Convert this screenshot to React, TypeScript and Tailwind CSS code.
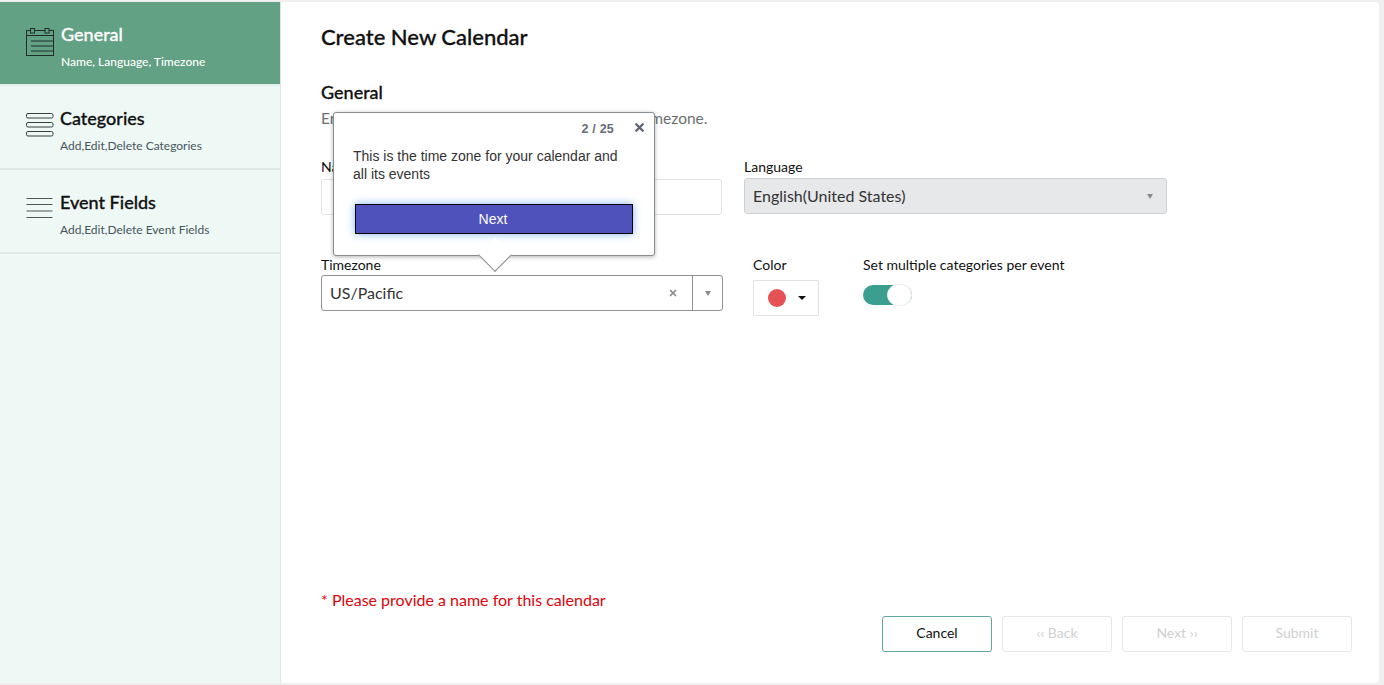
import { ReactNode } from 'react';
import { X } from 'lucide-react';

const CalendarIcon = () => (
  <svg width="30" height="30" viewBox="0 0 30 30" fill="none" stroke="#1f2d2a" strokeWidth="1">
    <rect x="1.5" y="4.5" width="27" height="25" />
    <path d="M1.5 9.5h27M6 15h22M6 20h22M6 25h22" />
    <rect x="5.5" y="2.5" width="4" height="4.5" fill="#62a184" />
    <rect x="20" y="2.5" width="4" height="4.5" fill="#62a184" />
  </svg>
);

const CategoriesIcon = () => (
  <svg width="30" height="30" viewBox="0 0 30 30" fill="none" stroke="#33413e" strokeWidth="1">
    <rect x="1.5" y="3.5" width="26.5" height="4.5" rx="1.5" />
    <rect x="1.5" y="12.5" width="26.5" height="4.5" rx="1.5" />
    <rect x="1.5" y="21.5" width="26.5" height="4.5" rx="1.5" />
  </svg>
);

const FieldsIcon = () => (
  <svg width="30" height="30" viewBox="0 0 30 30" fill="none" stroke="#4a5754" strokeWidth="1">
    <path d="M1.5 4.5h26M1.5 10.5h26M1.5 17h26M1.5 23.5h26" />
  </svg>
);

const Arrow = ({ className }: { className: string }) => (
  <span className={`inline-block h-0 w-0 border-x-[3.5px] border-t-[5px] border-x-transparent ${className}`} />
);

const NavItem = ({
  icon,
  title,
  sub,
  active,
}: {
  icon: ReactNode;
  title: string;
  sub: string;
  active?: boolean;
}) => (
  <div
    className={`flex h-[84px] border-b-2 pl-[25px] pt-[21px] ${
      active ? 'border-[#e3efe9] bg-[#62a184]' : 'border-[#dfe8e3]'
    }`}
  >
    <div className={`w-[30px] pt-[3px] ${active ? 'mr-[6px]' : 'mr-[5px]'}`}>{icon}</div>
    <div>
      <div className={`text-[18px] font-medium leading-[22px] [-webkit-text-stroke:0.3px] ${active ? 'text-white' : 'text-[#111]'}`}>{title}</div>
      <div className={`mt-[9px] text-[12px] leading-[16px] ${active ? 'font-medium text-white' : 'text-[#47555c]'}`}>{sub}</div>
    </div>
  </div>
);

const FooterButton = ({ label, primary }: { label: string; primary?: boolean }) => (
  <button
    className={`h-[36px] w-[110px] rounded-[3px] border pb-[3px] text-[14px] ${
      primary ? 'border-[#62a89c] text-[#111]' : 'border-[#e6e6e6] text-[#cfcfcf]'
    }`}
  >
    {label}
  </button>
);

export default function App() {
  return (
    <div className="h-[685px] w-[1384px] overflow-hidden bg-[#efefef] pb-[2px] pr-[5px] pt-[2px] font-['Lato',sans-serif]">
      <div className="flex h-full rounded-r-[3px] bg-white">
        <aside className="w-[281px] shrink-0 border-r border-[#dfe5e2] bg-[#eef8f5]">
          <NavItem icon={<CalendarIcon />} title="General" sub="Name, Language, Timezone" active />
          <NavItem icon={<CategoriesIcon />} title="Categories" sub="Add,Edit,Delete Categories" />
          <NavItem icon={<FieldsIcon />} title="Event Fields" sub="Add,Edit,Delete Event Fields" />
        </aside>

        <main className="relative flex min-w-0 flex-1 flex-col pl-[40px] pr-[27px] text-[#111]">
          <h1 className="mt-[21px] text-[22px] font-medium leading-[28px] [-webkit-text-stroke:0.3px]">Create New Calendar</h1>
          <h2 className="mt-[29px] text-[18px] font-medium leading-[24px] [-webkit-text-stroke:0.3px]">General</h2>
          <p className="mt-[4px] text-[15.5px] leading-[20px] text-[#6b6f73]">
            Enter a name and select the language and your timezone.
          </p>

          <div className="mt-[30px] flex">
            <div className="w-[401px]">
              <label className="block text-[14px] leading-[18px]">Name</label>
              <div className="mt-[3px] h-[36px] rounded-[3px] border border-[#e2e2e2]" />
            </div>
            <div className="ml-[22px] w-[423px]">
              <label className="block text-[14px] leading-[18px]">Language</label>
              <div className="mt-[2px] flex h-[36px] items-center justify-between rounded-[3px] border border-[#cfd1d3] bg-[#e7e8ea] pl-[8px] pr-[13px] text-[16px] text-[#333]">
                <span>English(United States)</span>
                <Arrow className="border-t-[#8a8a8a]" />
              </div>
            </div>
          </div>

          <div className="mt-[41px] flex">
            <div className="w-[402px]">
              <label className="block text-[14px] leading-[18px]">Timezone</label>
              <div className="mt-[1px] flex h-[36px] items-center rounded-[3px] border border-[#8f9396] pl-[8px] text-[16px] text-[#333]">
                <span className="flex-1">US/Pacific</span>
                <X size={10} strokeWidth={4} className="mr-[14px] text-[#888]" />
                <span className="flex h-full w-[30px] items-center justify-center border-l border-[#8f9396]">
                  <Arrow className="border-t-[#8a8a8a]" />
                </span>
              </div>
            </div>
            <div className="ml-[30px] w-[110px]">
              <label className="block text-[14px] leading-[18px]">Color</label>
              <div className="mt-[6px] flex h-[36px] w-[66px] items-center rounded-[1px] border border-[#e2e2e2] pl-[14px]">
                <span className="h-[18px] w-[18px] rounded-full bg-[#e45253]" />
                <span className="ml-[12px] h-0 w-0 border-x-[4px] border-t-[4px] border-x-transparent border-t-[#111]" />
              </div>
            </div>
            <div>
              <label className="block text-[14px] leading-[18px]">Set multiple categories per event</label>
              <div className="mt-[11px] flex h-[20px] w-[49px] items-center justify-end rounded-full bg-[#3b9f8f]">
                <span className="h-[22px] w-[25px] rounded-full border border-[#eee] bg-white" />
              </div>
            </div>
          </div>

          <div className="mt-auto flex flex-col pb-[31px]">
            <p className="text-[16px] leading-[20px] text-[#e0020a]">* Please provide a name for this calendar</p>
            <div className="mt-[6px] flex justify-end gap-[10px]">
              <FooterButton label="Cancel" primary />
              <FooterButton label="‹‹ Back" />
              <FooterButton label="Next ››" />
              <FooterButton label="Submit" />
            </div>
          </div>

          {/* tour popover */}
          <div className="absolute left-[52px] top-[110px] h-[144px] w-[322px] rounded-[3px] border border-[#8a8d90] bg-white font-['Liberation_Sans',sans-serif] shadow-[0_1px_4px_rgba(0,0,0,0.3)]">
            <div className="absolute right-[40px] top-[9px] text-[12.5px] font-bold leading-[14px] tracking-[0.2px] text-[#666c7a]">2 / 25</div>
            <X size={13} strokeWidth={4.5} className="absolute right-[8px] top-[8px] text-[#5f6675]" />
            <p className="absolute left-[19px] top-[34px] w-[280px] text-[14px] leading-[18px] text-[#333]">
              This is the time zone for your calendar and all its events
            </p>
            <button className="absolute left-[21px] top-[91px] h-[30px] w-[278px] border border-black bg-[#4f52bb] pr-[2px] text-[14px] text-white shadow-[0_0_8px_rgba(90,160,255,0.8)]">
              Next
            </button>
            <div className="absolute left-[149px] top-[130px] h-[24px] w-[24px] rotate-45 border-b border-r border-[#8a8d90] bg-white" />
          </div>
        </main>
      </div>
    </div>
  );
}
